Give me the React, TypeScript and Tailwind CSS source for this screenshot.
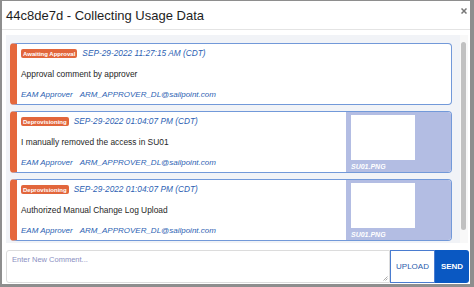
import React from 'react';

interface Entry {
  status: string;
  date: string;
  comment: string;
  attachment?: string;
}

const entries: Entry[] = [
  { status: 'Awaiting Approval', date: 'SEP-29-2022 11:27:15 AM (CDT)', comment: 'Approval comment by approver' },
  { status: 'Deprovisioning', date: 'SEP-29-2022 01:04:07 PM (CDT)', comment: 'I manually removed the access in SU01', attachment: 'SU01.PNG' },
  { status: 'Deprovisioning', date: 'SEP-29-2022 01:04:07 PM (CDT)', comment: 'Authorized Manual Change Log Upload', attachment: 'SU01.PNG' },
];

const CommentCard = ({ entry }: { entry: Entry }) => (
  <div className="flex h-[62px] shrink-0 overflow-hidden rounded-[4px] border border-[#7299d9] border-l-[7px] border-l-[#e5683c] bg-white">
    <div className="flex flex-1 flex-col pl-[4px] pt-[5px]">
      <div className="flex h-[9px] items-center gap-[5px]">
        <span className="flex h-[9px] items-center rounded-[2px] bg-[#e2663c] px-[2px] text-[6px] font-bold leading-none text-white">
          {entry.status}
        </span>
        <span className="text-[8.3px] italic leading-none text-[#2d5fb3]">{entry.date}</span>
      </div>
      <div className="mt-[11px] h-[10px] text-[8.4px] leading-[10px] text-[#1f1f1f]">{entry.comment}</div>
      <div className="mt-[11px] flex h-[10px] gap-[7px] text-[8px] italic leading-[10px] text-[#2d5fb3]">
        <span>EAM Approver</span>
        <span>ARM_APPROVER_DL@sailpoint.com</span>
      </div>
    </div>
    {entry.attachment && (
      <div className="flex w-[105px] flex-col bg-[#b3bde3] pl-[5px] pt-[3px]">
        <div className="h-[45px] w-[64px] bg-white" />
        <span className="mt-[2px] text-[7px] font-semibold italic leading-[9px] text-white">{entry.attachment}</span>
      </div>
    )}
  </div>
);

export default function App() {
  return (
    <div
      className="flex h-[287px] w-[474px] flex-col overflow-hidden border-t border-b-[3px] border-l-2 border-r-4 border-[#8e8e8e] bg-white"
      style={{ fontFamily: '"Liberation Sans", Arial, sans-serif' }}
    >
      {/* Header */}
      <div className="flex h-[29px] shrink-0 items-center justify-between border-b border-[#e4e4e4] pl-[4px] pr-[2px]">
        <span className="text-[13px] leading-none text-[#1e1e1e]">44c8de7d - Collecting Usage Data</span>
        <svg width="6" height="6" viewBox="0 0 6 6" className="mb-[8px] mr-[1px]">
          <path d="M0.5 0.5 L5.5 5.5 M5.5 0.5 L0.5 5.5" stroke="#777" strokeWidth="1.5" />
        </svg>
      </div>

      {/* Comment list */}
      <div className="ml-[4px] mr-[2px] mt-[5px] flex h-[208px] shrink-0 overflow-hidden">
        <div className="flex flex-1 flex-col gap-[6px] overflow-hidden bg-[#f1f3f7] pl-[4px] pr-[8px] pt-[8px]">
          {entries.map((e, i) => (
            <CommentCard key={i} entry={e} />
          ))}
        </div>
        <div className="w-[8px] bg-[#f8f8f8] pl-[1px] pt-[7px]">
          <div className="h-[188px] w-[5px] rounded-full bg-[#c1c1c1]" />
        </div>
      </div>

      {/* Input row */}
      <div className="ml-[4px] mr-[1px] mt-[7px] flex h-[33px] shrink-0">
        <div className="relative flex-1 rounded-l-[3px] border border-[#dcdcdc] px-[5px] pt-[5px] text-[7.5px] leading-none">
          <span className="text-[#8a8fc2]">Enter New Comment...</span>
          <svg width="5" height="5" viewBox="0 0 5 5" className="absolute bottom-[1px] right-[1px]">
            <path d="M0.5 4.5 L4.5 0.5 M2.5 4.5 L4.5 2.5" stroke="#888" strokeWidth="0.7" />
          </svg>
        </div>
        <div className="flex w-[45px] items-center justify-center border border-[#4a7cd0] bg-white text-[8px] leading-none text-[#2b5cad]">
          UPLOAD
        </div>
        <div className="flex w-[34px] items-center justify-center rounded-r-[3px] bg-[#0a58c2] text-[8px] font-bold leading-none text-white">
          SEND
        </div>
      </div>
    </div>
  );
}
